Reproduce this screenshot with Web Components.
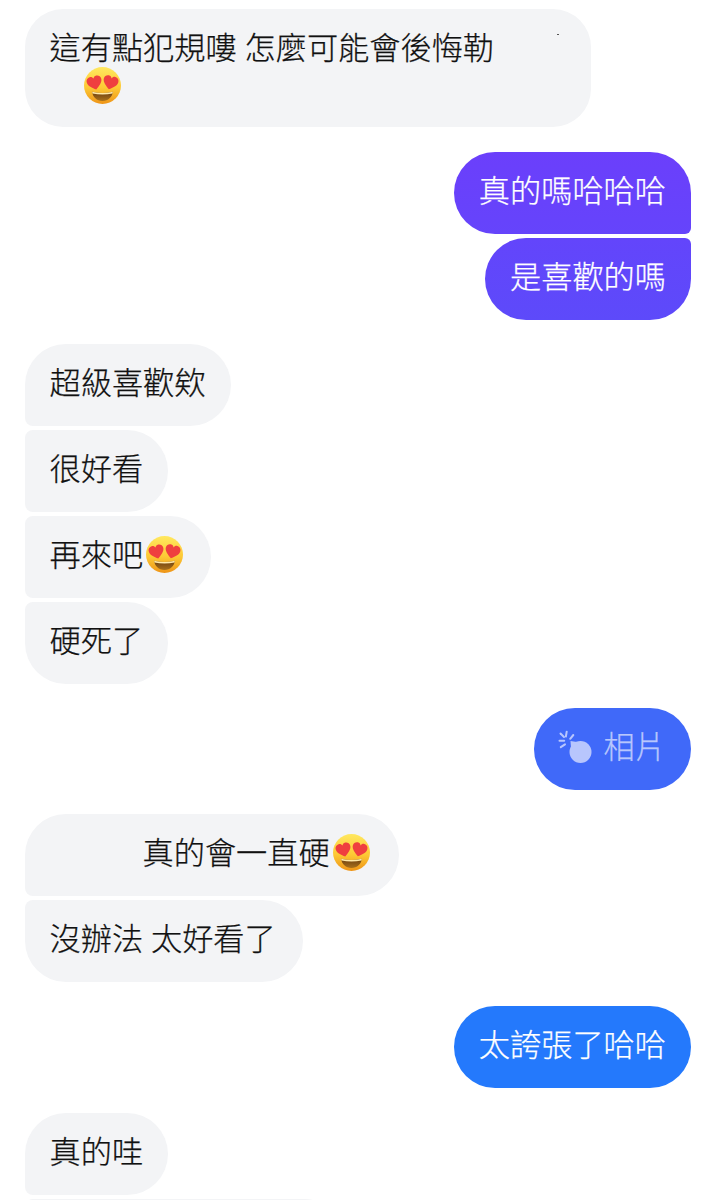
<!DOCTYPE html>
<html lang="zh-Hant">
<head>
<meta charset="utf-8">
<title>chat</title>
<style>
html, body { margin: 0; height: 1200px; overflow: hidden; background: #fff; }
</style>
</head>
<body>
<chat-thread>
    <chat-group>
        <chat-bubble first-only>
            <span style="display:block;position:relative">這有點犯規嘍 怎麼可能會後悔勒<chat-speck></chat-speck></span>
            <span style="display:flex;padding-left:31px;margin-top:2px"><love-emoji></love-emoji></span>
        </chat-bubble>
    </chat-group>
    <chat-group side="me" style="margin-top:1px">
        <chat-bubble tone="purple" place="top">真的嗎哈哈哈</chat-bubble>
        <chat-bubble tone="purple" place="bottom" style="padding-left:25.500px">是喜歡的嗎</chat-bubble>
    </chat-group>
    <chat-group>
        <chat-bubble place="top" style="padding-right:26px">超級喜歡欸</chat-bubble>
        <chat-bubble place="middle">很好看</chat-bubble>
        <chat-bubble place="middle">再來吧<love-emoji></love-emoji></chat-bubble>
        <chat-bubble place="bottom">硬死了</chat-bubble>
    </chat-group>
    <chat-group side="me">
        <chat-bubble tone="indigo"><photo-label>相片</photo-label></chat-bubble>
    </chat-group>
    <chat-group>
        <chat-bubble place="top"><span style="padding-left:93px">真的會一直硬</span><love-emoji style="margin-right:4px"></love-emoji></chat-bubble>
        <chat-bubble place="bottom" style="padding-right:27px">沒辦法 太好看了</chat-bubble>
    </chat-group>
    <chat-group side="me">
        <chat-bubble tone="blue">太誇張了哈哈</chat-bubble>
    </chat-group>
    <chat-group style="margin-top:1px">
        <chat-bubble place="top">真的哇</chat-bubble>
        <chat-bubble place="middle" style="width:320px">&nbsp;</chat-bubble>
    </chat-group>
</chat-thread>

<template id="thread-tpl">
    <style>
    :host {
        display: flex;
        flex-direction: column;
        gap: 24px;
        padding: 9px 16px 0 25px;
        box-sizing: border-box;
        width: 707px;
        height: 1200px;
        overflow: hidden;
        font-family: "Noto Sans CJK TC", "Liberation Sans", sans-serif;
        font-size: 31.2px;
        word-spacing: 1px;
        font-weight: 300;
        -webkit-text-stroke: 0.25px currentColor;
        color: #111;
    }
    </style>
    <slot></slot>
</template>

<template id="group-tpl">
    <style>
    :host {
        display: flex;
        flex-direction: column;
        flex-shrink: 0;
        align-items: flex-start;
        gap: 4px;
    }
    :host([side="me"]) { align-items: flex-end; }
    </style>
    <slot></slot>
</template>

<template id="bubble-tpl">
    <style>
    :host {
        display: block;
        box-sizing: border-box;
        height: 82px;
        flex-shrink: 0;
        padding: 17px 25px 0 24.5px;
        line-height: 39px;
        white-space: nowrap;
        background: #f3f4f6;
        border-radius: 41px;
    }
    :host([first-only]) { width: 566px; height: 118px; border-radius: 38px; }
    :host([place="top"]) { border-bottom-left-radius: 8px; }
    :host([place="middle"]) { border-top-left-radius: 8px; border-bottom-left-radius: 8px; }
    :host([place="bottom"]) { border-top-left-radius: 8px; }
    :host([tone]) { color: #fff; }
    :host([tone="purple"][place="top"]) {
        background: linear-gradient(#6b3ffb, #6544fb);
        border-radius: 41px 41px 6px 41px;
    }
    :host([tone="purple"][place="bottom"]) {
        background: linear-gradient(#6345fb, #5d4afa);
        border-radius: 41px 6px 41px 41px;
    }
    :host([tone="indigo"]) { background: #4069f9; color: #b8c6fd; }
    :host([tone="blue"]) { background: #2479fc; }
    </style>
    <slot></slot>
</template>

<template id="emoji-tpl">
    <style>
    :host {
        display: inline-block;
        width: 37px;
        height: 37px;
        margin: 0 3px;
        vertical-align: -7px;
    }
    svg { display: block; width: 100%; height: 100%; }
    </style>
    <svg viewBox="0 0 36 36">
        <defs>
            <linearGradient id="skin" x1="0" y1="0" x2="0" y2="1">
                <stop offset="0" stop-color="#ffe85f"/>
                <stop offset="0.55" stop-color="#fdc935"/>
                <stop offset="1" stop-color="#ee9417"/>
            </linearGradient>
            <linearGradient id="mouth" x1="0" y1="0" x2="0" y2="1">
                <stop offset="0" stop-color="#6e4010"/>
                <stop offset="1" stop-color="#a8701c"/>
            </linearGradient>
            <path id="heart" d="M0 6C-3 3.800-6.500 1.200-6.500-2C-6.500-4.500-4.700-5.800-2.900-5.800C-1.500-5.800-.5-5 0-3.800C.5-5 1.500-5.800 2.900-5.800C4.700-5.800 6.500-4.500 6.500-2C6.500 1.200 3 3.800 0 6z"/>
        </defs>
        <circle cx="18" cy="18" r="18" fill="url(#skin)"/>
        <use href="#heart" fill="#ef3f3f" transform="translate(10.300 15.400) rotate(-14) scale(1.120)"/>
        <use href="#heart" fill="#ef3f3f" transform="translate(25.800 15.200) rotate(14) scale(1.120)"/>
        <path d="M8 24.200C14.500 25.800 21.500 25.800 28 24.200C27.600 29.600 23.600 33 18 33S8.400 29.600 8 24.200z" fill="url(#mouth)"/>
        <path d="M8 24.200C14.500 25.800 21.500 25.800 28 24.200L27.800 25.800C21.500 27.200 14.500 27.200 8.200 25.800z" fill="#ffe9a8"/>
    </svg>
</template>

<template id="photo-tpl">
    <style>
    :host {
        display: inline-flex;
        gap: 12px;
        color: #b8c6fd;
        margin-left: -1px;
    }
    svg { display: block; width: 34px; height: 36px; margin-top: 2px; }
    </style>
    <svg viewBox="0 0 34 36">
        <circle cx="22.500" cy="25" r="11" fill="#b8c6fd"/>
        <path d="M12.500 14L19 15L13 21z" fill="#b8c6fd"/>
        <g stroke="#b8c6fd" stroke-width="2" stroke-linecap="round" fill="none">
            <path d="M2.500 6.500L6 10"/>
            <path d="M8.700 4.700L7.900 9.500"/>
            <path d="M15.300 8L12.200 11.800"/>
            <path d="M1.500 13.700H6.200"/>
            <path d="M2.800 20.200L7 17.400"/>
        </g>
    </svg>
    <slot></slot>
</template>

<template id="speck-tpl">
    <style>
    :host {
        position: absolute;
        left: 507px;
        top: 8px;
        width: 2px;
        height: 1px;
        background: #555;
    }
    </style>
</template>

<script>
function register(name, tplId) {
    const tpl = document.getElementById(tplId);
    customElements.define(name, class extends HTMLElement {
        constructor() {
            super();
            let shadow = this.attachShadow({mode: 'open'});
            shadow.appendChild(tpl.content.cloneNode(true));
        }
    });
}

register('chat-thread', 'thread-tpl');
register('chat-group', 'group-tpl');
register('chat-bubble', 'bubble-tpl');
register('love-emoji', 'emoji-tpl');
register('photo-label', 'photo-tpl');
register('chat-speck', 'speck-tpl');
</script>
</body>
</html>
